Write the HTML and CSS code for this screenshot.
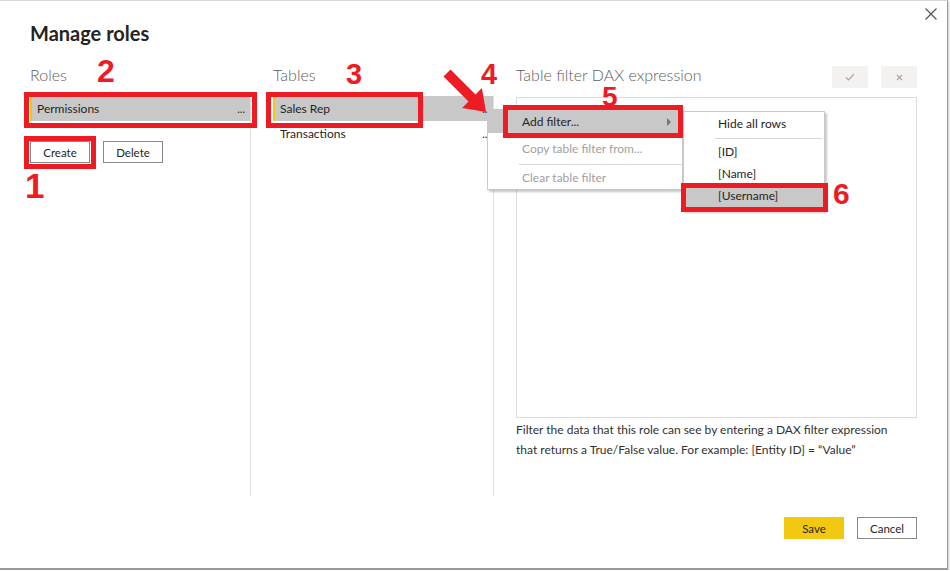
FILE: index.html
```html
<!DOCTYPE html>
<html>
<head>
<meta charset="utf-8">
<title>Manage roles</title>
<link rel="stylesheet" href="styles.css">
</head>
<body>
<div class="dialog">
  <header class="head">
    <h1 class="title">Manage roles</h1>
    <button class="close" aria-label="Close">
      <svg width="12" height="12" viewBox="0 0 12 12"><path d="M0.5 0.5 L11.5 11.5 M11.5 0.5 L0.5 11.5" stroke="#555" stroke-width="1.2" fill="none"/></svg>
    </button>
  </header>

  <div class="grid">
    <h2 class="col-h roles-h">Roles</h2>
    <h2 class="col-h tables-h">Tables</h2>
    <div class="col-h dax-h">
      <h2>Table filter DAX expression</h2>
      <div class="icon-btns">
        <button class="icon-btn" aria-label="Apply">
          <svg width="10" height="8" viewBox="0 0 10 8"><path d="M1 4.5 L3.5 7 L9 1" stroke="#a8a8a8" stroke-width="1.2" fill="none"/></svg>
        </button>
        <button class="icon-btn" aria-label="Discard">
          <svg width="7" height="7" viewBox="0 0 7 7"><path d="M1 1 L6 6 M6 1 L1 6" stroke="#a8a8a8" stroke-width="1.2" fill="none"/></svg>
        </button>
      </div>
    </div>

    <div class="col roles">
      <div class="item selected"><span>Permissions</span><span class="more">...</span></div>
      <div class="btns">
        <button class="btn">Create</button>
        <button class="btn">Delete</button>
      </div>
    </div>

    <div class="col tables">
      <div class="item selected"><span>Sales Rep</span><span class="more">...</span></div>
      <div class="item"><span>Transactions</span><span class="more">...</span></div>
    </div>

    <div class="col dax">
      <div class="editor"></div>
      <p class="help">Filter the data that this role can see by entering a DAX filter expression that returns a True/False value. For example: [Entity ID] = “Value”</p>
    </div>
  </div>

  <footer class="foot">
    <button class="btn save">Save</button>
    <button class="btn">Cancel</button>
  </footer>

  <!-- context menu -->
  <div class="menu ctx">
    <div class="mi hot"><span>Add filter...</span><span class="caret"></span></div>
    <div class="mi dis tall">Copy table filter from...</div>
    <div class="sep"></div>
    <div class="mi dis">Clear table filter</div>
  </div>

  <div class="menu sub">
    <div class="si first">Hide all rows</div>
    <div class="sep2"></div>
    <div class="si">[ID]</div>
    <div class="si">[Name]</div>
    <div class="si hot">[Username]</div>
  </div>

  <!-- annotations -->
  <div class="mark m-perm"></div>
  <div class="mark m-create"></div>
  <div class="mark m-sales"></div>
  <div class="mark m-add"></div>
  <div class="mark m-user"></div>

  <span class="num n1">1</span>
  <span class="num n2">2</span>
  <span class="num n3">3</span>
  <span class="num n4">4</span>
  <span class="num n5">5</span>
  <span class="num n6">6</span>

  <svg class="arrow" width="70" height="70" viewBox="435 50 70 70">
    <polygon fill="#ed1c24" points="443.5,75.5 450.5,68.5 475.5,93.5 481.9,87.1 486,111 462.1,106.9 468.5,100.5"/>
  </svg>
</div>
</body>
</html>
```

FILE: styles.css
```css
* { box-sizing: border-box; }

html, body {
  margin: 0;
  padding: 0;
  background: #ffffff;
}

body {
  font-family: "Lato", "Open Sans", sans-serif;
  font-size: 12px;
  color: #252423;
}

button {
  font-family: inherit;
  cursor: default;
}

.dialog {
  position: relative;
  width: 948px;
  height: 570px;
  background: #fff;
  border-top: 1px solid #d6d6d6;
  border-right: 1px solid #9a9a9a;
  border-bottom: 2px solid #9a9a9a;
  box-shadow: 1px 1px 2px rgba(0,0,0,0.2);
  overflow: hidden;
}

/* header */
.head {
  height: 61px;
  display: flex;
  justify-content: space-between;
  align-items: flex-start;
  padding: 7px 10px 0 30px;
}

.title {
  margin: 11px 0 0 0;
  font-size: 20px;
  line-height: 28px;
  font-weight: 700;
  color: #252423;
}

.close {
  border: 0;
  background: transparent;
  padding: 0;
  width: 12px;
  height: 12px;
  display: block;
}
.close svg { display: block; }

/* grid of columns */
.grid {
  display: grid;
  grid-template-columns: 221px 243px 453px;
  grid-template-rows: 34px 400px;
  margin-left: 30px;
}

.col-h {
  margin: 0;
  padding-top: 3px;
  font-size: 16px;
  line-height: 20px;
  font-weight: 300;
  color: #605e5c;
}
.tables-h { padding-left: 22px; }

.dax-h {
  display: flex;
  justify-content: space-between;
  align-items: flex-start;
  padding: 0 30px 0 22px;
}
.dax-h h2 {
  margin: 3px 0 0 0;
  font-size: 16px;
  line-height: 20px;
  font-weight: 300;
  color: #605e5c;
}

.icon-btns {
  display: flex;
  gap: 13px;
  margin-top: 4px;
}
.icon-btn {
  width: 36px;
  height: 22px;
  border: 0;
  background: #f3f2f1;
  display: flex;
  align-items: center;
  justify-content: center;
  padding: 0;
}

.col {
  border-right: 1px solid #e1dfdd;
}
.col.dax {
  border-right: 0;
  padding: 0 30px 0 22px;
}
.tables {
  padding-left: 22px;
}

.item {
  height: 25px;
  display: flex;
  align-items: center;
  justify-content: space-between;
  padding: 0 5px 0 7px;
  font-size: 12px;
  color: #252423;
}
.item.selected {
  background: #c8c8c8;
  border-left: 2px solid #f2c811;
  padding-left: 5px;
}
.tables .item { padding-right: 3px; }
.more {
  font-size: 11px;
  letter-spacing: 0;
}

.btns {
  display: flex;
  gap: 13px;
  margin-top: 20px;
}
.btn {
  width: 60px;
  height: 22px;
  padding: 0;
  border: 1px solid #8a8886;
  background: #fff;
  font-size: 11.5px;
  color: #252423;
}

.editor {
  margin-top: 1px;
  height: 321px;
  border: 1px solid #dcdcdc;
}
.help {
  margin: 2px 0 0 0;
  font-size: 12px;
  line-height: 20px;
  color: #323130;
  width: 390px;
}

.foot {
  display: flex;
  justify-content: flex-end;
  gap: 13px;
  margin-top: 21px;
  padding-right: 30px;
}
.save {
  background: #f2c811;
  border-color: #f2c811;
}

/* menus */
.menu {
  position: absolute;
  background: #fff;
  border: 1px solid #c8c8c8;
  box-shadow: 2px 2px 2px rgba(0,0,0,0.22);
  font-size: 12px;
  color: #252423;
}
.ctx {
  left: 487px;
  top: 108px;
  width: 196px;
  height: 81px;
}
.mi {
  height: 23px;
  display: flex;
  align-items: center;
  justify-content: space-between;
  padding: 0 11px 0 34px;
}
.mi.hot { background: #c8c8c8; }
.mi.dis { color: #a19f9d; }
.mi.tall { height: 31px; }
.caret {
  width: 0;
  height: 0;
  border-top: 4px solid transparent;
  border-bottom: 4px solid transparent;
  border-left: 4px solid #797775;
}
.sep {
  height: 1px;
  background: #d6d6d6;
  margin-left: 31px;
}
.ctx .mi:last-child { height: 24px; }

.sub {
  left: 683px;
  top: 110px;
  width: 142px;
  height: 100px;
  padding-top: 0;
}
.si {
  height: 22px;
  line-height: 22px;
  padding-left: 34px;
}
.si.first { height: 24px; line-height: 24px; }
.si.hot { background: #c8c8c8; }
.sep2 {
  height: 1px;
  background: #d6d6d6;
  margin: 2px 2px 2px 31px;
}

/* annotations */
.mark {
  position: absolute;
  border: 5px solid #ed1c24;
}
.m-perm { left: 24px; top: 91px; width: 233px; height: 36px; }
.m-create { left: 24px; top: 135px; width: 72px; height: 33px; }
.m-sales { left: 266px; top: 91px; width: 157px; height: 36px; }
.m-add { left: 503px; top: 104px; width: 180px; height: 33px; }
.m-user { left: 681px; top: 182px; width: 147px; height: 29px; }

.num {
  position: absolute;
  font-family: "Liberation Sans", Arial, sans-serif;
  font-weight: 700;
  line-height: 0.72;
  color: #ed1c24;
}
.n1 { left: 25px; top: 172px; font-size: 35px; }
.n2 { left: 97px; top: 59px; font-size: 32px; }
.n3 { left: 346px; top: 63px; font-size: 29px; }
.n4 { left: 481px; top: 63px; font-size: 29px; }
.n5 { left: 602px; top: 86px; font-size: 28px; }
.n6 { left: 833px; top: 182px; font-size: 30px; }

.arrow {
  position: absolute;
  left: 435px;
  top: 50px;
}
```
